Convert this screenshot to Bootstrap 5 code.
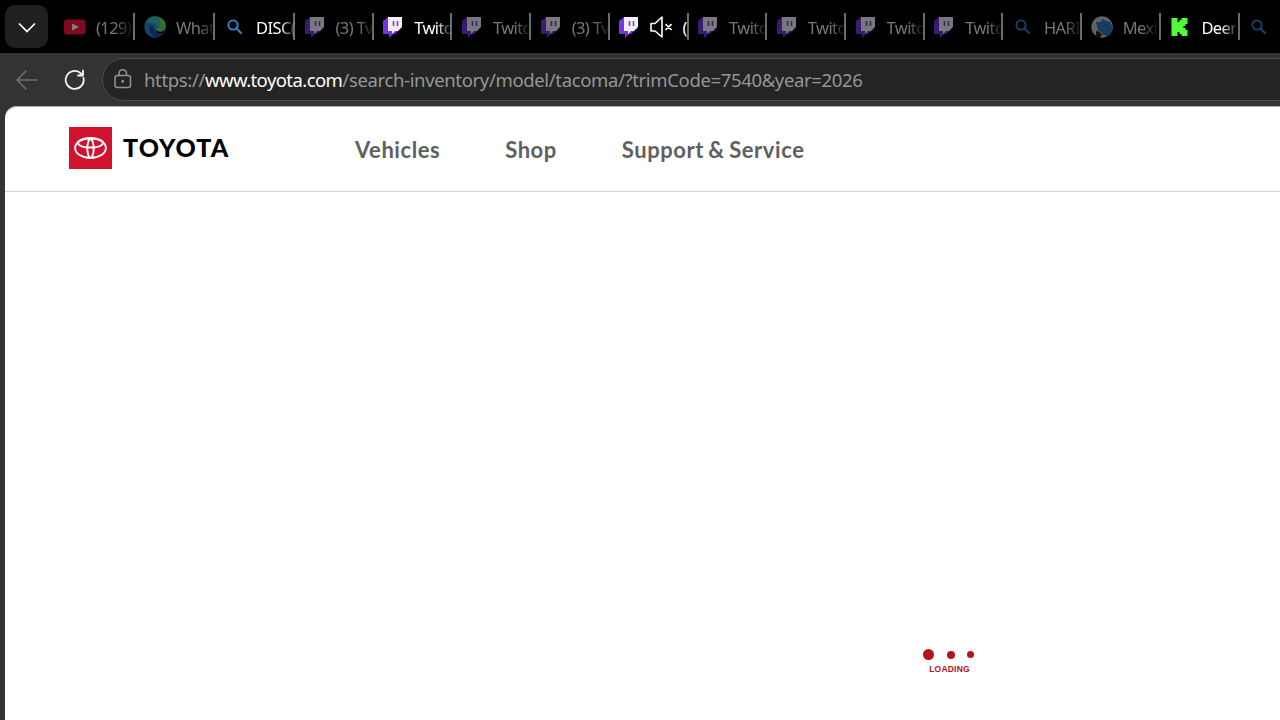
<!DOCTYPE html>
<html lang="en">
<head>
<meta charset="utf-8">
<meta name="viewport" content="width=device-width, initial-scale=1">
<title>Toyota Inventory</title>
<link href="https://cdn.jsdelivr.net/npm/bootstrap@5.3.0/dist/css/bootstrap.min.css" rel="stylesheet">
<style>
body{background:#333;font-family:"Noto Sans",sans-serif}
.tabstrip{height:53px;background:#000;padding-left:5px}
.tab-menu{width:43px;height:43px;margin-top:5px;border-radius:10px;background:#202020}
.tabs-wrap{padding-left:7px}
.tab-item{width:78.72px;height:27px;margin-top:13px;border-right:2px solid #6b6b6b;padding-left:8.500px;color:#fff}
.tab-wide{width:80px;padding-left:9px}
.tab-item svg{width:22px;height:22px;flex:none}
.tab-title{font-size:16.500px;line-height:27px;margin-left:10px;padding-top:1px;letter-spacing:-.6px;-webkit-mask-image:linear-gradient(90deg,#000 calc(100% - 15px),rgba(0,0,0,.15));mask-image:linear-gradient(90deg,#000 calc(100% - 15px),rgba(0,0,0,.15))}
.tab-short{-webkit-mask-image:none;mask-image:none}
.asleep svg{opacity:.5}
.asleep .tab-title{color:#777}
.toolbar{height:53px}
.address{margin-left:16px;height:43px;width:1200px;border:1px solid #4c4c4c;border-radius:22px;background:#242424;color:#969696;font-size:18.500px}
.url-text{margin-left:11px;letter-spacing:-.35px}
.url-text b{color:#fff;font-weight:400;letter-spacing:-.57px}
.site{margin-left:5px;border-top-left-radius:12px;background:#fff;box-shadow:inset 0 1px #aaa}
.site-header{height:86px;border-bottom:1px solid #d3d3d3;padding-left:64px}
.brand-name{font:900 25px/30px Lato,sans-serif;color:#000;margin-left:11px;width:107px;letter-spacing:1.100px;margin-top:-1px}
.site-link{font:700 22px/28px Lato,sans-serif;color:#5e5f60;text-decoration:none;letter-spacing:.55px;word-spacing:-1.500px}
.loader{width:51px;margin-left:918px;margin-top:457px;color:#b5121b}
.loader i{border-radius:50%;background:#b5121b}
.loader p{font:700 8.500px/10px "Liberation Sans",sans-serif;letter-spacing:.2px}
</style>
</head>
<body class="vh-100 overflow-hidden d-flex flex-column">
<svg class="d-none">
<symbol id="twitch" viewBox="0 0 22 22"><path fill="#7536df" d="M1 5 6 1h13v11l-6 6h-2l-4 4v-4H1z"/><path fill="#f4edff" d="M6 1h14v10l-4 4h-3l-3 3v-3H6z"/><path stroke="#66549a" stroke-width="1.600" d="M11.500 5v5M15.500 5v5"/></symbol>
<symbol id="search" viewBox="0 0 22 22"><g fill="none" stroke="#3286d0" stroke-width="1.900" stroke-linecap="round"><circle cx="9" cy="9" r="4.600"/><path d="m12.500 12.500 4.500 4.500"/></g></symbol>
<symbol id="youtube" viewBox="0 0 22 22"><rect x="0" y="3.500" width="21.500" height="15" rx="3" fill="#ff143f"/><path fill="#fff" d="m8 7.500 7 3.500-7 3.500z"/></symbol>
<symbol id="edge" viewBox="0 0 22 22"><circle cx="11" cy="11" r="10.700" fill="#2388d0"/><path fill="#35bdb5" d="M1 8C3 3 6 .3 11 .3c6 0 10.700 4 10.700 9 0 4-3 6-6.500 6-2.600 0-3.700-1-3.200-2 2-3-1-6-4-6C5 6 3 6 1 8z"/><path fill="#73dc51" d="M15 1.200c4 1.500 6.700 4.500 6.700 8.100 0 4-3 6-6.500 6-2 0-3-.7-3.200-1.500 5-2 6-7 3-12.600z"/><path fill="#164f9d" d="M7 9c-3 4-1 9 4 12.500 4 0 7-2 8.500-5-5 2-9 0-9.500-4C9.800 11 9 9.500 7 9z"/><path fill="#000" d="M12 13.800c1 2 5 3 8.500 1l-1 2c-4 1.500-8 .2-7.500-3z"/></symbol>
<symbol id="globe" viewBox="0 0 22 22"><circle cx="11" cy="11" r="10.700" fill="#c2c5c9"/><path fill="#327bc2" d="m5 6 4 0 3-3 3 2 4 1 2 4c1 5-1 8-4 10l-5-1-2-3-3-1-1-4z"/><path fill="#222" d="m5 15 4 1 2 3-2 3-4-2z"/></symbol>
<symbol id="kick" viewBox="0 0 22 22"><path fill="#53fc38" d="M2.500 2h6v4h2V4h2V2h6v6h-2v2h-2v2h2v2h2v6h-6v-2h-2v-2h-2v4h-6z"/></symbol>
</svg>
<header class="tabstrip d-flex flex-shrink-0">
<button class="tab-menu border-0 p-0 flex-shrink-0" aria-label="Tabs"><svg width="18" height="10" viewBox="0 0 18 10" fill="none" stroke="#fff" stroke-width="1.700" stroke-linecap="round"><path d="m1.500 1 7.500 7.500L16.500 1"/></svg></button>
<nav class="tabs-wrap d-flex" id="tabs"></nav>
</header>
<div class="toolbar d-flex align-items-center flex-shrink-0">
<svg class="flex-shrink-0" width="22" height="20" style="margin-left:16px" viewBox="0 0 22 20" fill="none" stroke="#707070" stroke-width="1.500" stroke-linecap="round" stroke-linejoin="round"><path d="M21 10H1M10 1 1 10l9 9"/></svg>
<svg class="flex-shrink-0" width="22" height="22" style="margin-left:26px" viewBox="0 0 22 22" fill="none" stroke="#f5f5f5" stroke-width="1.800" stroke-linecap="round" stroke-linejoin="round"><path d="M19.500 9A9 9 0 1 1 17 4.500L19 6.300M19 1.500v5h-5"/></svg>
<div class="address d-flex align-items-center flex-shrink-0">
<svg class="flex-shrink-0" style="margin-left:10px;margin-top:-2px" width="20" height="20" viewBox="0 0 20 20" fill="none" stroke="#929292" stroke-width="1.500"><rect x="2" y="6.500" width="15.500" height="12" rx="2.500"/><path d="M6 6.500V4.500a3.700 3.700 0 0 1 7.500 0v2"/><circle cx="9.800" cy="12.500" r=".7" fill="#aaa"/></svg>
<span class="url-text text-nowrap">https://<b>www.toyota.com</b>/search-inventory/model/tacoma/?trimCode=7540&amp;year=2026</span>
</div>
</div>
<main class="site flex-grow-1">
<header class="site-header d-flex align-items-center">
<a class="d-flex align-items-center text-decoration-none" href="#" style="margin-top:-2px">
<svg width="43" height="42" viewBox="0 0 43 42"><path fill="#d3122d" d="M0 0h43v42H0z"/><g fill="none" stroke="#fff" stroke-width="1.900"><ellipse cx="21.500" cy="21" rx="15.400" ry="10"/><path d="M21.500 11.500c-6 0-12.500 1.600-12.500 4.300 0 3 6 4.700 12.500 4.700S34 18.800 34 15.800c0-2.700-6.500-4.300-12.500-4.300z"/><ellipse cx="21.500" cy="21.500" rx="3.200" ry="9.200"/></g></svg>
<span class="brand-name">TOYOTA</span></a>
<nav class="d-flex" style="margin-left:125px;margin-top:2px;gap:65px"><a class="site-link" href="#">Vehicles</a><a class="site-link" href="#">Shop</a><a class="site-link text-nowrap" href="#">Support &amp; Service</a></nav>
</header>
<div class="loader"><div class="d-flex align-items-center justify-content-between"><i style="width:11px;height:11px"></i><i style="width:8px;height:8px"></i><i style="width:7px;height:7px"></i></div><p class="text-center text-nowrap m-0" style="padding-top:4px;padding-left:2px">LOADING</p></div>
</main>
<script>
const tabs=[["youtube","(129)",0],["edge","What",0],["search","DISC(",1],["twitch","(3) Tv",0],["twitch","Twitc",1],["twitch","Twitc",0],["twitch","(3) Tv",0],["twitch","(",1,1],["twitch","Twitc",0],["twitch","Twitc",0],["twitch","Twitc",0],["twitch","Twitc",0],["search","HARI",0],["globe","Mexi",0],["kick","Deer",1],["search","",0]];
const mute='<svg style="margin-left:10px" viewBox="0 0 22 22" fill="none" stroke="#fff" stroke-width="1.600" stroke-linejoin="round"><path d="M1 7.500h4L12 1v20l-7-6H1zM15.500 8l6 6m0-6-6 6"/></svg>';
document.getElementById("tabs").innerHTML=tabs.map(([icon,title,on,muted],i)=>`<div class="tab-item d-flex align-items-center flex-shrink-0 ${i<3?"tab-wide":""} ${on?"":"asleep"}"><svg><use href="#${icon}"/></svg>${muted?mute:""}<span class="tab-title text-nowrap ${muted?"tab-short":""}">${title}</span></div>`).join("");
</script>
<script src="https://cdn.jsdelivr.net/npm/bootstrap@5.3.0/dist/js/bootstrap.bundle.min.js"></script>
</body>
</html>
